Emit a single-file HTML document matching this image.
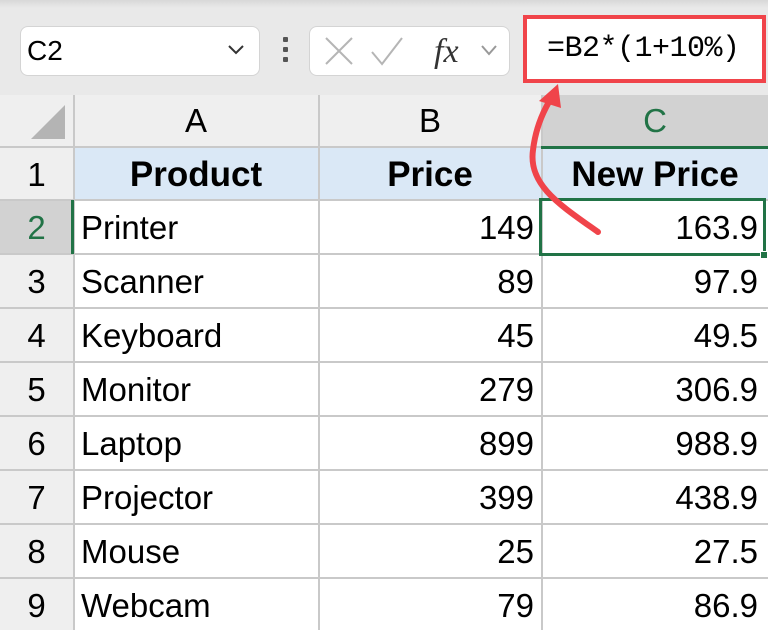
<!DOCTYPE html>
<html><head><style>
*{margin:0;padding:0;box-sizing:border-box}
body{width:768px;height:630px;overflow:hidden;background:#fff;font-family:"Liberation Sans",sans-serif;position:relative}
.top{position:absolute;left:0;top:0;width:768px;height:95px;background:#e9e9e9}
.box{position:absolute;background:#fff;border:1px solid #d4d4d4;border-radius:8px}
.c{position:absolute;display:flex;align-items:center;font-size:33px;color:#000;white-space:nowrap}
.hdr{position:absolute;background:#efefef}
.v{position:absolute;width:2px;background:#c9c9c9}
.h{position:absolute;height:2px;background:#c9c9c9}
</style></head><body>
<div class="top"></div>
<div style="position:absolute;left:0;top:0;width:768px;height:8px;background:linear-gradient(#d8d8d8,#e9e9e9)"></div>
<div class="box" style="left:20px;top:26px;width:240px;height:50px"></div>
<div class="c" style="left:27px;top:30px;height:42px;font-size:28px">C2</div>
<svg style="position:absolute;left:226px;top:42px" width="20" height="14"><path d="M3 4 L10 11 L17 4" fill="none" stroke="#333" stroke-width="2"/></svg>
<div style="position:absolute;left:283px;top:37px;width:5px;height:5px;background:#555;border-radius:1px"></div>
<div style="position:absolute;left:283px;top:47px;width:5px;height:5px;background:#555;border-radius:1px"></div>
<div style="position:absolute;left:283px;top:57px;width:5px;height:5px;background:#555;border-radius:1px"></div>
<div class="box" style="left:309px;top:26px;width:201px;height:50px"></div>
<svg style="position:absolute;left:322px;top:34px" width="190" height="36">
<path d="M4 4 L30 30 M30 4 L4 30" stroke="#b5b5b5" stroke-width="2" fill="none"/>
<path d="M50 18 L60 30 L80 4" stroke="#b5b5b5" stroke-width="2" fill="none"/>
<text x="112" y="28" font-family="Liberation Serif,serif" font-style="italic" font-size="34" fill="#333">fx</text>
<path d="M160 12 L167 20 L174 12" stroke="#999" stroke-width="2" fill="none"/>
</svg>
<div style="position:absolute;left:523px;top:15px;width:243px;height:68px;background:#fff;border:4px solid #f0444a"></div>
<div class="c" style="left:547px;top:29px;height:40px;font-family:'Liberation Mono',monospace;font-size:30px;letter-spacing:-0.5px">=B2*(1+10%)</div>

<div class="hdr" style="left:0;top:95px;width:768px;height:53px"></div>
<div class="hdr" style="left:0;top:95px;width:73px;height:535px"></div>
<div style="position:absolute;left:541px;top:95px;width:227px;height:53px;background:#d2d2d2"></div>
<div style="position:absolute;left:0;top:200px;width:73px;height:54px;background:#d2d2d2"></div>
<svg style="position:absolute;left:28px;top:100px" width="40" height="42"><path d="M3 39 L37 39 L37 5 Z" fill="#b4b4b4"/></svg>
<div style="position:absolute;left:75px;top:148px;width:693px;height:52px;background:#dae8f6"></div>

<div class="v" style="left:73px;top:95px;height:535px"></div>
<div class="v" style="left:318px;top:95px;height:535px"></div>
<div class="v" style="left:541px;top:95px;height:535px"></div>
<div class="h" style="left:0;top:146px;width:768px"></div>
<div class="h" style="left:0;top:199px;width:768px"></div>
<div class="h" style="left:0;top:253px;width:768px"></div>
<div class="h" style="left:0;top:307px;width:768px"></div>
<div class="h" style="left:0;top:361px;width:768px"></div>
<div class="h" style="left:0;top:415px;width:768px"></div>
<div class="h" style="left:0;top:469px;width:768px"></div>
<div class="h" style="left:0;top:523px;width:768px"></div>
<div class="h" style="left:0;top:577px;width:768px"></div>

<div style="position:absolute;left:541px;top:146px;width:227px;height:3px;background:#217346"></div>
<div style="position:absolute;left:71px;top:200px;width:3px;height:54px;background:#217346"></div>
<div style="position:absolute;left:539px;top:198px;width:227px;height:58px;border:3px solid #217346"></div>
<div style="position:absolute;left:760px;top:251px;width:8px;height:8px;background:#217346;border:1px solid #fff"></div>

<div class="c" style="left:74px;width:244px;top:95px;height:52px;justify-content:center">A</div>
<div class="c" style="left:319px;width:222px;top:95px;height:52px;justify-content:center">B</div>
<div class="c" style="left:542px;width:226px;top:95px;height:52px;justify-content:center;color:#217346">C</div>

<div class="c" style="left:0;width:73px;top:148px;height:54px;justify-content:center">1</div>
<div class="c" style="left:74px;width:244px;top:148px;height:54px;justify-content:center;font-weight:bold;font-size:35px">Product</div>
<div class="c" style="left:319px;width:222px;top:148px;height:54px;justify-content:center;font-weight:bold;font-size:35px">Price</div>
<div class="c" style="left:542px;width:226px;top:148px;height:54px;justify-content:center;font-weight:bold;font-size:35px">New Price</div>

<div class="c" style="left:0;width:73px;top:201px;height:54px;justify-content:center;color:#217346">2</div>
<div class="c" style="left:81px;top:201px;height:54px">Printer</div>
<div class="c" style="right:234px;top:201px;height:54px">149</div>
<div class="c" style="right:10px;top:201px;height:54px">163.9</div>

<div class="c" style="left:0;width:73px;top:255px;height:54px;justify-content:center">3</div>
<div class="c" style="left:81px;top:255px;height:54px">Scanner</div>
<div class="c" style="right:234px;top:255px;height:54px">89</div>
<div class="c" style="right:10px;top:255px;height:54px">97.9</div>

<div class="c" style="left:0;width:73px;top:309px;height:54px;justify-content:center">4</div>
<div class="c" style="left:81px;top:309px;height:54px">Keyboard</div>
<div class="c" style="right:234px;top:309px;height:54px">45</div>
<div class="c" style="right:10px;top:309px;height:54px">49.5</div>

<div class="c" style="left:0;width:73px;top:363px;height:54px;justify-content:center">5</div>
<div class="c" style="left:81px;top:363px;height:54px">Monitor</div>
<div class="c" style="right:234px;top:363px;height:54px">279</div>
<div class="c" style="right:10px;top:363px;height:54px">306.9</div>

<div class="c" style="left:0;width:73px;top:417px;height:54px;justify-content:center">6</div>
<div class="c" style="left:81px;top:417px;height:54px">Laptop</div>
<div class="c" style="right:234px;top:417px;height:54px">899</div>
<div class="c" style="right:10px;top:417px;height:54px">988.9</div>

<div class="c" style="left:0;width:73px;top:471px;height:54px;justify-content:center">7</div>
<div class="c" style="left:81px;top:471px;height:54px">Projector</div>
<div class="c" style="right:234px;top:471px;height:54px">399</div>
<div class="c" style="right:10px;top:471px;height:54px">438.9</div>

<div class="c" style="left:0;width:73px;top:525px;height:54px;justify-content:center">8</div>
<div class="c" style="left:81px;top:525px;height:54px">Mouse</div>
<div class="c" style="right:234px;top:525px;height:54px">25</div>
<div class="c" style="right:10px;top:525px;height:54px">27.5</div>

<div class="c" style="left:0;width:73px;top:579px;height:54px;justify-content:center">9</div>
<div class="c" style="left:81px;top:579px;height:54px">Webcam</div>
<div class="c" style="right:234px;top:579px;height:54px">79</div>
<div class="c" style="right:10px;top:579px;height:54px">86.9</div>

<svg style="position:absolute;left:0;top:0" width="768" height="630">
<path d="M598 232 C560 205 528 185 533 150 C536 125 545 108 553 95" fill="none" stroke="#f0444a" stroke-width="6" stroke-linecap="round"/>
<path d="M558 84 L539 101 L561 108 Z" fill="#f0444a"/>
</svg>
</body></html>
